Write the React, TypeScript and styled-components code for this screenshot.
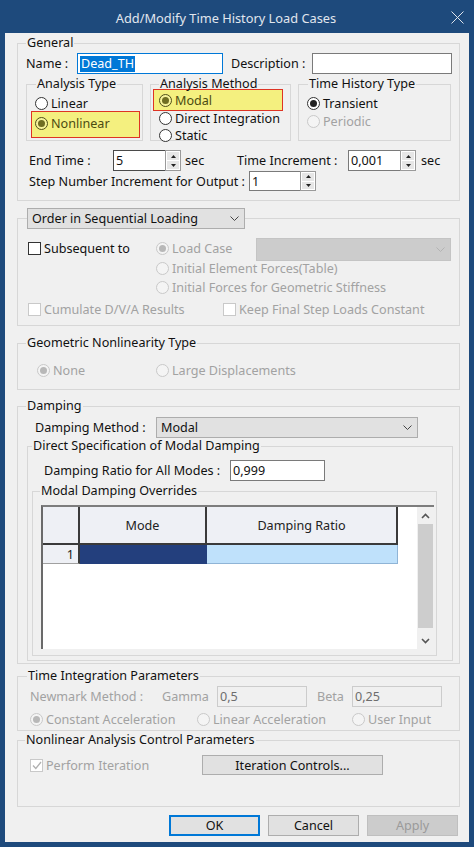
import React from "react";
import styled, { createGlobalStyle } from "styled-components";

const FONT = `"Noto Sans", "Noto Sans CJK KR", sans-serif`;

const GlobalStyle = createGlobalStyle`
  * { box-sizing: border-box; }
  html, body { margin: 0; padding: 0; background: #1e4a7c; }
  body { font-family: ${FONT}; font-size: 12.6px; color: #111; }
`;

const Window = styled.div`
  width: 474px;
  height: 847px;
  background: #1e4a7c;
  display: flex;
  flex-direction: column;
`;

const TitleBar = styled.div`
  height: 33px;
  flex: none;
  display: flex;
  align-items: center;
  color: #e1e6ee;
  font-size: 12.8px;
  padding-top: 2px;
`;

const TitleText = styled.div`
  flex: 1;
  text-align: center;
  padding-left: 10px;
`;

const CloseBox = styled.div`
  width: 32px;
  display: flex;
  align-items: center;
  justify-content: center;
  padding-right: 2px;
`;

const Client = styled.div`
  flex: 1;
  margin: 0 5px 5px;
  background: #f0f0f0;
  padding: 2px 9px 0 12px;
  display: flex;
  flex-direction: column;
`;

const Group = styled.fieldset<{ $h: number; $w?: number; $mt?: number; $ml?: number; $pl?: number }>`
  margin: ${(p) => p.$mt ?? 0}px 0 0 ${(p) => p.$ml ?? 0}px;
  padding: 0 0 0 ${(p) => p.$pl ?? 0}px;
  border: 1px solid #d7d7d7;
  height: ${(p) => p.$h}px;
  width: ${(p) => (p.$w ? `${p.$w}px` : "auto")};
  min-width: 0;
  flex: none;
`;

const Legend = styled.legend<{ $ml?: number }>`
  margin-left: ${(p) => p.$ml ?? 8}px;
  padding: 0 1px;
  height: 16px;
  line-height: 16px;
  color: #111;
`;

const ComboLegend = styled.legend`
  margin-left: 9px;
  padding: 0;
  height: 21px;
`;

const Row = styled.div<{ $h: number; $mt?: number; $pl?: number; $gap?: number }>`
  display: flex;
  align-items: center;
  height: ${(p) => p.$h}px;
  margin-top: ${(p) => p.$mt ?? 0}px;
  padding-left: ${(p) => p.$pl ?? 0}px;
  gap: ${(p) => p.$gap ?? 0}px;
  white-space: nowrap;
`;

const Label = styled.span<{ $w?: number; $ml?: number; $disabled?: boolean }>`
  display: inline-block;
  flex: none;
  width: ${(p) => (p.$w ? `${p.$w}px` : "auto")};
  margin-left: ${(p) => p.$ml ?? 0}px;
  color: ${(p) => (p.$disabled ? "#a2a2a2" : "#111")};
  white-space: nowrap;
`;

const TextBox = styled.div<{ $w?: number; $h?: number; $focus?: boolean; $disabled?: boolean }>`
  flex: none;
  width: ${(p) => (p.$w ? `${p.$w}px` : "auto")};
  height: ${(p) => p.$h ?? 21}px;
  border: 1px solid ${(p) => (p.$focus ? "#0078d7" : p.$disabled ? "#cccccc" : "#7a7a7a")};
  background: ${(p) => (p.$disabled ? "#f0f0f0" : "#fff")};
  color: ${(p) => (p.$disabled ? "#6d6d6d" : "#111")};
  padding-left: 2px;
  display: flex;
  align-items: center;
  overflow: hidden;
`;

const Selected = styled.span`
  background: #0078d7;
  color: #fff;
  padding: 0 1px;
  line-height: 16px;
`;

const SpinWrap = styled.div<{ $w: number; $h: number }>`
  flex: none;
  display: flex;
  width: ${(p) => p.$w}px;
  height: ${(p) => p.$h}px;
`;

const SpinField = styled.div<{ $dark?: boolean }>`
  flex: 1;
  height: 100%;
  border: 1px solid ${(p) => (p.$dark ? "#4a4a4a" : "#7a7a7a")};
  border-right: none;
  background: #fff;
  padding-left: 2px;
  display: flex;
  align-items: center;
`;

const SpinButtons = styled.div`
  width: 16px;
  height: 100%;
  border: 1px solid #9a9a9a;
  background: #fff;
  display: flex;
  flex-direction: column;
  padding: 1px;
  gap: 1px;
`;

const SpinHalf = styled.div`
  flex: 1;
  background: #e6e6e6;
  display: flex;
  align-items: center;
  justify-content: center;
`;

const SubRow = styled.div`
  display: flex;
  gap: 7px;
  margin-top: 2px;
  align-items: flex-start;
`;

const Option = styled.label<{ $h?: number; $w?: number; $mt?: number; $pl?: number; $disabled?: boolean }>`
  display: flex;
  align-items: center;
  gap: 3px;
  height: ${(p) => (p.$h ? `${p.$h}px` : "auto")};
  line-height: 15px;
  width: ${(p) => (p.$w ? `${p.$w}px` : "auto")};
  flex: none;
  margin-top: ${(p) => p.$mt ?? 0}px;
  padding-left: ${(p) => p.$pl ?? 0}px;
  color: ${(p) => (p.$disabled ? "#a2a2a2" : "inherit")};
  white-space: nowrap;
`;

const RadioCircle = styled.span<{ $checked?: boolean; $disabled?: boolean; $hl?: boolean }>`
  width: 13px;
  height: 13px;
  flex: none;
  border-radius: 50%;
  border: 1px solid ${(p) => (p.$hl ? "#4f4e18" : p.$disabled ? "#c9c9c9" : "#333")};
  background: ${(p) => (p.$hl ? "#f6f29a" : p.$disabled ? "#f4f4f4" : "#fff")};
  display: flex;
  align-items: center;
  justify-content: center;
  &::after {
    content: "";
    display: ${(p) => (p.$checked ? "block" : "none")};
    width: 7px;
    height: 7px;
    border-radius: 50%;
    background: ${(p) => (p.$hl ? "#6f6d22" : p.$disabled ? "#b8b8b8" : "#222")};
  }
`;

const CheckBox = styled.span<{ $disabled?: boolean }>`
  width: 13px;
  height: 13px;
  flex: none;
  border: 1px solid ${(p) => (p.$disabled ? "#c9c9c9" : "#333")};
  background: #fff;
  display: flex;
  align-items: center;
  justify-content: center;
`;

const Highlight = styled.div<{ $w: number; $h: number; $ml: number; $mt?: number; $pl: number; $pb?: number }>`
  width: ${(p) => p.$w}px;
  height: ${(p) => p.$h}px;
  margin-left: ${(p) => p.$ml}px;
  margin-top: ${(p) => p.$mt ?? 0}px;
  padding-left: ${(p) => p.$pl}px;
  padding-bottom: ${(p) => p.$pb ?? 0}px;
  background: #f4f07f;
  border: 1px solid #de3424;
  display: flex;
  align-items: center;
  color: #4c4b12;
`;

const Combo = styled.div<{ $w: number; $h?: number; $disabled?: boolean }>`
  flex: none;
  width: ${(p) => p.$w}px;
  height: ${(p) => p.$h ?? 21}px;
  background: ${(p) => (p.$disabled ? "#cccccc" : "#e1e1e1")};
  border: 1px solid ${(p) => (p.$disabled ? "#c4c4c4" : "#adadad")};
  display: flex;
  align-items: center;
  justify-content: space-between;
  padding: 0 5px 0 4px;
  color: #111;
`;

const SeqGrid = styled.div`
  display: grid;
  grid-template-columns: 128px 100px 195px;
  grid-template-rows: 21px 19px 19px;
  margin-top: 9px;
  padding-left: 10px;
  align-items: center;
`;

const SpanCell = styled.div`
  grid-column: 2 / 4;
`;

const ComboCell = styled.div`
  align-self: start;
  height: 21px;
`;

const DataGrid = styled.div`
  width: 393px;
  height: 144px;
  margin: 6px 0 0 8px;
  background: #fff;
  border-left: 2px solid #6a6a6a;
  border-top: 2px solid #7d7d7d;
  display: flex;
`;

const GridBody = styled.div`
  flex: 1;
  display: grid;
  grid-template-columns: 37px 127px 191px;
  grid-template-rows: 38px 19px;
  align-content: start;
`;

const HeadCell = styled.div`
  background: #eef0f5;
  border-right: 2px solid #3a3a3a;
  border-bottom: 2px solid #3a3a3a;
  display: flex;
  align-items: center;
  justify-content: center;
  color: #222;
`;

const RowHead = styled.div`
  background: #eef0f5;
  border-right: 2px solid #3a3a3a;
  border-bottom: 1px solid #a0a0a0;
  display: flex;
  align-items: center;
  justify-content: flex-end;
  padding-right: 4px;
  color: #222;
`;

const DataCell = styled.div<{ $bg: string; $border: string }>`
  background: ${(p) => p.$bg};
  border-right: 1px solid ${(p) => p.$border};
  border-bottom: 1px solid ${(p) => p.$border};
`;

const ScrollBar = styled.div`
  width: 17px;
  background: #f0f0f0;
  display: flex;
  flex-direction: column;
`;

const ScrollArrow = styled.div`
  height: 17px;
  display: flex;
  align-items: center;
  justify-content: center;
  flex: none;
`;

const ScrollThumb = styled.div`
  height: 104px;
  margin: 0 1px;
  background: #cdcdcd;
  flex: none;
`;

const ScrollTrack = styled.div`
  flex: 1;
`;

const Button = styled.div<{ $w: number; $h?: number; $default?: boolean; $disabled?: boolean }>`
  flex: none;
  width: ${(p) => p.$w}px;
  height: ${(p) => p.$h ?? 21}px;
  background: ${(p) => (p.$disabled ? "#cccccc" : "#e1e1e1")};
  border: ${(p) => (p.$default ? "2px solid #0078d7" : p.$disabled ? "1px solid #bfbfbf" : "1px solid #adadad")};
  color: ${(p) => (p.$disabled ? "#9a9a9a" : "#111")};
  display: flex;
  align-items: center;
  justify-content: center;
`;

const ButtonBar = styled.div`
  display: flex;
  justify-content: flex-end;
  gap: 8px;
  margin: 8px 2px 0 0;
  height: 21px;
`;

/* ---------- small drawings ---------- */

const Chevron = ({ color = "#444" }: { color?: string }) => (
  <svg width="9" height="5" viewBox="0 0 9 5">
    <polyline points="0.5,0.5 4.5,4.5 8.5,0.5" fill="none" stroke={color} strokeWidth="1" />
  </svg>
);

const ScrollChevron = ({ up }: { up?: boolean }) => (
  <svg width="9" height="6" viewBox="0 0 9 6">
    <polyline
      points={up ? "1,5 4.5,1.5 8,5" : "1,1 4.5,4.5 8,1"}
      fill="none"
      stroke="#555"
      strokeWidth="1.6"
    />
  </svg>
);

const Tri = ({ up }: { up?: boolean }) => (
  <svg width="5" height="3" viewBox="0 0 5 3">
    <polygon points={up ? "0,3 2.5,0 5,3" : "0,0 2.5,3 5,0"} fill="#222" />
  </svg>
);

const CheckMark = () => (
  <svg width="10" height="9" viewBox="0 0 10 9">
    <polyline points="1,4.5 3.8,7.5 9,1" fill="none" stroke="#b0b0b0" strokeWidth="1.3" />
  </svg>
);

const CloseIcon = () => (
  <svg width="13" height="13" viewBox="0 0 13 13">
    <line x1="0.5" y1="0.5" x2="12.5" y2="12.5" stroke="#dfe4ec" strokeWidth="1" />
    <line x1="12.5" y1="0.5" x2="0.5" y2="12.5" stroke="#dfe4ec" strokeWidth="1" />
  </svg>
);

const Radio = (p: { checked?: boolean; disabled?: boolean; hl?: boolean }) => (
  <RadioCircle $checked={p.checked} $disabled={p.disabled} $hl={p.hl} />
);

const Spinner = ({ w, h, value, dark }: { w: number; h: number; value: string; dark?: boolean }) => (
  <SpinWrap $w={w} $h={h}>
    <SpinField $dark={dark}>{value}</SpinField>
    <SpinButtons>
      <SpinHalf>
        <Tri up />
      </SpinHalf>
      <SpinHalf>
        <Tri />
      </SpinHalf>
    </SpinButtons>
  </SpinWrap>
);

export default function App() {
  return (
    <>
      <GlobalStyle />
      <Window>
        <TitleBar>
          <TitleText>Add/Modify Time History Load Cases</TitleText>
          <CloseBox>
            <CloseIcon />
          </CloseBox>
        </TitleBar>
        <Client>
          {/* General */}
          <Group $h={166} $pl={8}>
            <Legend $ml={0}>General</Legend>
            <Row $h={21} $mt={2}>
              <Label $w={51}>Name :</Label>
              <TextBox $w={146} $focus>
                <Selected>Dead_TH</Selected>
              </TextBox>
              <Label $w={81} $ml={8}>
                Description :
              </Label>
              <TextBox $w={140} />
            </Row>
            <SubRow>
              <Group $h={65} $w={117}>
                <Legend $ml={9}>Analysis Type</Legend>
                <Option $h={16} $mt={3} $pl={8}>
                  <Radio />
                  Linear
                </Option>
                <Highlight $w={109} $h={27} $ml={4} $pl={3} $pb={3}>
                  <Option>
                    <Radio checked hl />
                    Nonlinear
                  </Option>
                </Highlight>
              </Group>
              <Group $h={65} $w={141}>
                <Legend>Analysis Method</Legend>
                <Highlight $w={130} $h={22} $ml={2} $mt={-3} $pl={5}>
                  <Option>
                    <Radio checked hl />
                    Modal
                  </Option>
                </Highlight>
                <Option $h={16} $mt={-1} $pl={8}>
                  <Radio />
                  Direct Integration
                </Option>
                <Option $h={18} $pl={8}>
                  <Radio />
                  Static
                </Option>
              </Group>
              <Group $h={65} $w={153}>
                <Legend $ml={9}>Time History Type</Legend>
                <Option $h={17} $mt={3} $pl={8}>
                  <Radio checked />
                  Transient
                </Option>
                <Option $h={19} $pl={8} $disabled>
                  <Radio disabled />
                  Periodic
                </Option>
              </Group>
            </SubRow>
            <Row $h={21} $mt={9} $pl={3}>
              <Label $w={84}>End Time :</Label>
              <Spinner w={68} h={21} value="5" dark />
              <Label $w={52} $ml={4}>
                sec
              </Label>
              <Label $w={111}>Time Increment :</Label>
              <Spinner w={68} h={21} value="0,001" />
              <Label $ml={5}>sec</Label>
            </Row>
            <Row $h={20} $pl={3}>
              <Label $w={220}>Step Number Increment for Output :</Label>
              <Spinner w={67} h={20} value="1" />
            </Row>
          </Group>

          {/* Order in Sequential Loading */}
          <Group $h={118} $mt={7}>
            <ComboLegend>
              <Combo $w={218}>
                Order in Sequential Loading
                <Chevron />
              </Combo>
            </ComboLegend>
            <SeqGrid>
              <Option>
                <CheckBox />
                Subsequent to
              </Option>
              <Option $disabled>
                <Radio checked disabled />
                Load Case
              </Option>
              <ComboCell>
                <Combo $w={195} $h={23} $disabled>
                  <span />
                  <Chevron color="#b3b3b3" />
                </Combo>
              </ComboCell>
              <SpanCell>
                <Option $disabled>
                  <Radio disabled />
                  Initial Element Forces(Table)
                </Option>
              </SpanCell>
              <SpanCell>
                <Option $disabled>
                  <Radio disabled />
                  Initial Forces for Geometric Stiffness
                </Option>
              </SpanCell>
            </SeqGrid>
            <Row $h={19} $mt={3} $pl={10}>
              <Option $w={195} $disabled>
                <CheckBox $disabled />
                Cumulate D/V/A Results
              </Option>
              <Option $disabled>
                <CheckBox $disabled />
                Keep Final Step Loads Constant
              </Option>
            </Row>
          </Group>

          {/* Geometric Nonlinearity Type */}
          <Group $h={55} $mt={9}>
            <Legend>Geometric Nonlinearity Type</Legend>
            <Row $h={18} $mt={10} $pl={19}>
              <Option $w={119} $disabled>
                <Radio checked disabled />
                None
              </Option>
              <Option $disabled>
                <Radio disabled />
                Large Displacements
              </Option>
            </Row>
          </Group>

          {/* Damping */}
          <Group $h={266} $mt={8}>
            <Legend>Damping</Legend>
            <Row $h={21} $mt={3} $pl={17}>
              <Label $w={121}>Damping Method :</Label>
              <Combo $w={262}>
                Modal
                <Chevron />
              </Combo>
            </Row>
            <Group $h={223} $w={426} $ml={9}>
              <Legend $ml={4}>Direct Specification of Modal Damping</Legend>
              <Row $h={21} $mt={6} $pl={16}>
                <Label $w={186}>Damping Ratio for All Modes :</Label>
                <TextBox $w={95}>0,999</TextBox>
              </Row>
              <Group $h={173} $w={405} $ml={4} $mt={2}>
                <Legend $ml={7}>Modal Damping Overrides</Legend>
                <DataGrid>
                  <GridBody>
                    <HeadCell />
                    <HeadCell>Mode</HeadCell>
                    <HeadCell>Damping Ratio</HeadCell>
                    <RowHead>1</RowHead>
                    <DataCell $bg="#233f7d" $border="#233f7d" />
                    <DataCell $bg="#bfe1fb" $border="#8fb4d6" />
                  </GridBody>
                  <ScrollBar>
                    <ScrollArrow>
                      <ScrollChevron up />
                    </ScrollArrow>
                    <ScrollThumb />
                    <ScrollTrack />
                    <ScrollArrow>
                      <ScrollChevron />
                    </ScrollArrow>
                  </ScrollBar>
                </DataGrid>
              </Group>
            </Group>
          </Group>

          {/* Time Integration Parameters */}
          <Group $h={63} $mt={4}>
            <Legend $ml={9}>Time Integration Parameters</Legend>
            <Row $h={21} $mt={2} $pl={12}>
              <Label $w={132} $disabled>
                Newmark Method :
              </Label>
              <Label $w={55} $disabled>
                Gamma
              </Label>
              <TextBox $w={90} $disabled>
                0,5
              </TextBox>
              <Label $w={35} $ml={10} $disabled>
                Beta
              </Label>
              <TextBox $w={90} $disabled>
                0,25
              </TextBox>
            </Row>
            <Row $h={19} $mt={3} $pl={12}>
              <Option $w={167} $disabled>
                <Radio checked disabled />
                Constant Acceleration
              </Option>
              <Option $w={155} $disabled>
                <Radio disabled />
                Linear Acceleration
              </Option>
              <Option $disabled>
                <Radio disabled />
                User Input
              </Option>
            </Row>
          </Group>

          {/* Nonlinear Analysis Control Parameters */}
          <Group $h={75} $mt={1}>
            <Legend $ml={7}>Nonlinear Analysis Control Parameters</Legend>
            <Row $h={20} $mt={7} $pl={12}>
              <Option $w={172} $disabled>
                <CheckBox $disabled>
                  <CheckMark />
                </CheckBox>
                Perform Iteration
              </Option>
              <Button $w={181} $h={20}>
                Iteration Controls...
              </Button>
            </Row>
          </Group>

          <ButtonBar>
            <Button $w={91} $default>
              OK
            </Button>
            <Button $w={91}>Cancel</Button>
            <Button $w={91} $disabled>
              Apply
            </Button>
          </ButtonBar>
        </Client>
      </Window>
    </>
  );
}
